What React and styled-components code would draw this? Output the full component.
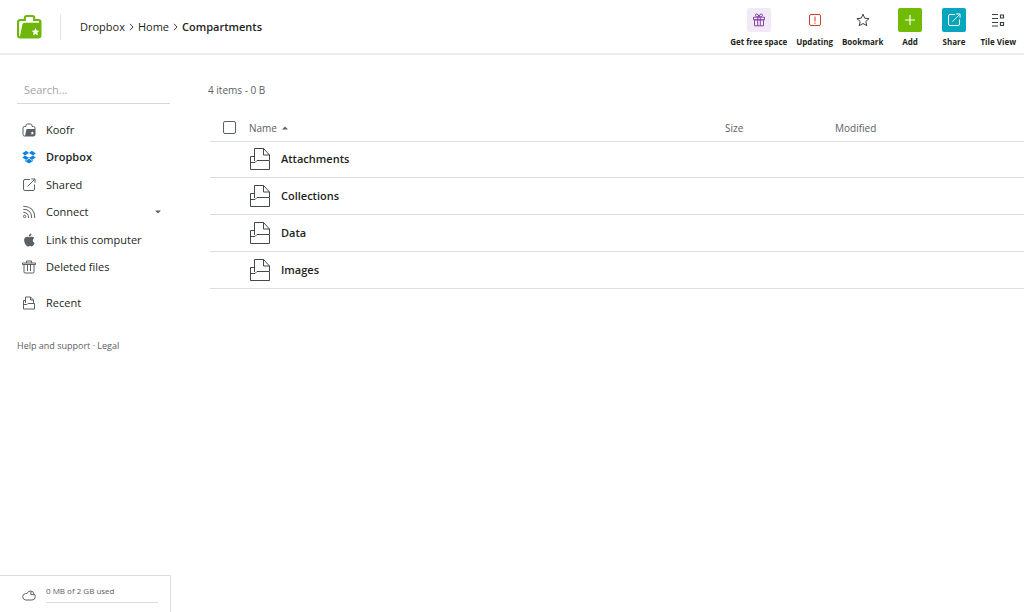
import styled, { createGlobalStyle, css } from "styled-components";

const GlobalStyle = createGlobalStyle`
    *{
        box-sizing: border-box;
    }
    body{
        margin: 0;
        background: #fff;
        color: #1d1f20;
        font-family: "Open Sans", "Noto Sans", sans-serif;
        font-size: 11px;
        line-height: 16px;
    }
    a{
        color: inherit;
        text-decoration: none;
    }
    button{
        margin: 0;
        padding: 0;
        border: 0;
        background: none;
        color: inherit;
        font: inherit;
        cursor: pointer;
    }
`;

const Page = styled.div`
    display: flex;
    flex-direction: column;
    min-height: 100vh;
`;
const Header = styled.header`
    display: flex;
    align-items: center;
    height: 55px;
    padding: 0 8px 0 16px;
    border-bottom: 2px solid #ececec;
`;
const Logo = styled.a`
    display: flex;
    padding-right: 18px;
    border-right: 1px solid #e4e4e4;
    svg{
        display: block;
    }
`;
const Breadcrumbs = styled.nav`
    display: flex;
    align-items: center;
    gap: 4px;
    flex: 1;
    padding-left: 19px;
`;
const Crumb = styled.a`
    font-weight: ${props => props.$current ? 600 : 400};
`;
const Toolbar = styled.div`
    display: flex;
    gap: 9px;
`;
const ToolButton = styled.button`
    display: flex;
    flex-direction: column;
    align-items: center;
    gap: 4px;
    min-width: 35px;
    padding-top: 2px;
    font-size: 8px;
    font-weight: 700;
    line-height: 12px;
    white-space: nowrap;
`;
const ToolIcon = styled.span`
    display: flex;
    align-items: center;
    justify-content: center;
    width: 24px;
    height: 24px;
    border-radius: 2px;
    background: ${props => props.$bg || "transparent"};
    color: ${props => props.$color || "#3c4043"};
`;
const Body = styled.div`
    display: flex;
    flex: 1;
`;
const Sidebar = styled.aside`
    display: flex;
    flex-direction: column;
    flex: none;
    width: 171px;
`;
const SearchInput = styled.input`
    height: 28px;
    margin: 21px 1px 12px 17px;
    padding: 0 7px;
    border: 0;
    border-bottom: 1px solid #d6d6d6;
    outline: 0;
    background: none;
    color: inherit;
    font: inherit;
    &::placeholder{
        color: #a3a3a3;
        opacity: 1;
    }
`;
const Places = styled.ul`
    display: grid;
    grid-auto-rows: 1fr;
    height: ${props => props.$height};
    margin: 0 0 8px;
    padding: 0;
    list-style: none;
`;
const Place = styled.li`
    display: flex;
    align-items: center;
    padding: 0 8px 0 22px;
`;
const PlaceLink = styled.a`
    display: flex;
    align-items: center;
    gap: 10px;
    flex: 1;
    color: #1d1f20;
    ${props => props.$active &&
    css`
        font-weight: 600;
    `}
    svg{
        color: ${props => props.$active ? "#1081de" : "#5a6063"};
    }
`;
const ExpandButton = styled.button`
    display: flex;
    padding: 5px 2px;
`;
const HelpLinks = styled.div`
    margin: 13px 0 0 17px;
    color: #5a6063;
    font-size: 9px;
`;
const Storage = styled.div`
    display: flex;
    align-items: center;
    gap: 10px;
    height: 37px;
    margin-top: auto;
    padding: 0 12px 2px 22px;
    border-top: 1px solid #dcdcdc;
    border-right: 1px solid #dcdcdc;
    color: #5a6063;
    svg{
        margin-top: 4px;
    }
`;
const StorageUsed = styled.div`
    flex: 1;
    height: 20px;
    border-bottom: 1px solid #dcdcdc;
    font-size: 8px;
    line-height: 15px;
`;
const Main = styled.main`
    flex: 1;
    padding: 27px 0 0 37px;
`;
const Summary = styled.p`
    margin: 0 0 17px;
    color: #5a6063;
    font-size: 10px;
`;
const FileTable = styled.table`
    width: calc(100% - 2px);
    height: 174px;
    margin-left: 2px;
    border-collapse: collapse;
    table-layout: fixed;
    th, td{
        padding: 0;
        border-bottom: 1px solid #dedede;
        text-align: left;
    }
    th{
        height: 26px;
        color: #5a6063;
        font-size: 10px;
        font-weight: 400;
    }
`;
const Column = styled.col`
    width: ${props => props.$width};
`;
const SelectAll = styled.input`
    appearance: none;
    display: block;
    width: 13px;
    height: 13px;
    margin: 0 0 0 13px;
    border: 1px solid #5a6063;
    border-radius: 2px;
    background: #fff;
    &:checked{
        background: #71ba05;
    }
`;
const SortButton = styled.button`
    display: flex;
    align-items: center;
    gap: 5px;
`;
const FileLink = styled.a`
    display: flex;
    align-items: center;
    gap: 10px;
    font-weight: 600;
    svg{
        display: block;
    }
`;

const Icon = ({ width = 14, height = 14, children }) => (
    <svg width={width} height={height} viewBox={`0 0 ${width} ${height}`} fill="none" stroke="currentColor" aria-hidden="true">
        {children}
    </svg>
);

const LogoIcon = () => (
    <svg width="26" height="26" viewBox="0 0 26 26" aria-label="Koofr" role="img">
        <path d="M4.200 5h3.500V4q0-3 3-3h5.600q3 0 3 3v1h3.100q3.100 0 3.100 3.100v13.200q0 3.200-3.200 3.200H4.200Q1 24.500 1 21.300V8.200Q1 5 4.200 5z" fill="#6eb70a" />
        <path d="M3.100 8.500q0-1.500 1.500-1.500h5.300V4q0-1 1-1h5.200q1 0 1 1v3h5.100q.9 0 .9.900v.8H8.600q-1.800 0-2.200 1.800L3.900 22.600q-.8-.3-.8-1.300z" fill="#fff" />
        <path d="M19.500 13.900l1.100 2.500 2.700.3-2 1.900.5 2.700-2.300-1.400-2.400 1.400.6-2.700-2.100-1.900 2.800-.3z" fill="#fff" />
    </svg>
);

const BriefcaseIcon = () => (
    <Icon>
        <path d="M2.500 3.500H4V2.400Q4 1 5.400 1h3.200Q10 1 10 2.400v1.100h1.500q1.500 0 1.500 1.500v6.500q0 1.500-1.500 1.500h-9Q1 13 1 11.500V5q0-1.500 1.500-1.500z" />
        <path d="M4.500 6H13v5.500q0 1.500-1.500 1.500H3z" fill="currentColor" stroke="none" />
        <path d="M10.300 8.300l.5 1.200 1.300.1-1 .9.300 1.300-1.100-.7-1.100.7.300-1.300-1-.9 1.300-.1z" fill="#fff" stroke="none" />
    </Icon>
);
const DropboxIcon = () => (
    <Icon>
        <g fill="currentColor" stroke="none">
            <path d="M4.200.8L.3 3.300l2.600 2.100L7 3z" />
            <path d="M9.800.8L7 3l4.100 2.400 2.600-2.100z" />
            <path d="M2.900 5.400L.3 7.500l3.900 2.500L7 7.800z" />
            <path d="M11.100 5.400L7 7.800 9.800 10l3.900-2.500z" />
            <path d="M7 8.500l-2.800 2.300-1.300-.8v1L7 13.400l4.100-2.400v-1l-1.300.8z" />
        </g>
    </Icon>
);
const ShareIcon = () => (
    <Icon>
        <path d="M8 1.500H3Q1.500 1.500 1.500 3v8q0 1.500 1.500 1.500h8q1.500 0 1.500-1.500V6.500" />
        <path d="M5.500 8.500l7.300-7.300M9.200 1h3.800v3.800" />
    </Icon>
);
const FeedIcon = () => (
    <Icon>
        <circle cx="2.600" cy="11.400" r="1.200" />
        <path d="M1.300 7.400q5.300 0 5.300 5.600M1.300 4.300q8.400 0 8.400 8.700M1.300 1.300q11.500 0 11.500 11.700" />
    </Icon>
);
const AppleIcon = () => (
    <Icon>
        <path d="M9.400.6q.1 1.200-.7 2.100-.8.900-1.900.9-.2-1.100.6-2 .8-.9 2-1zM12.300 4.900q-1.500.9-1.500 2.500 0 1.900 1.800 2.600-.5 1.500-1.400 2.600-.8 1-1.800.8l-.9-.3q-.8-.3-1.600.1-1 .4-1.700.1-1.100-.5-2.200-2.600-1.300-2.600-.8-4.600.7-2.300 2.900-2.300.6 0 1.300.3.600.3 1.100.1.600-.2 1.400-.4 2.200-.4 3.400 1.100z" fill="currentColor" stroke="none" />
    </Icon>
);
const TrashIcon = () => (
    <Icon>
        <path d="M.5 3h13v1.500H.5zM4.500 3V1h5v2M2 4.500v7.400Q2 13 3.100 13h7.800q1.100 0 1.100-1.100V4.500M5.500 5v6M8.500 5v6" />
    </Icon>
);
const RecentIcon = () => (
    <Icon>
        <path d="M3.500 7V1H8.500L11.500 4V7M8.500 1V4h3M3.500 4.500H1.500v8.500h11V7.500H6L5 8.500H1.500" />
    </Icon>
);
const FolderIcon = () => (
    <Icon width={22} height={24}>
        <path d="M5.500 14V1.500H14.500L20.500 8V13M14.500 1.500V8H20.500M5.500 9.500H1.500V22.500H20.500V13.500H8L6 15.500H1.500" stroke="#303335" strokeWidth=".9" />
    </Icon>
);
const CloudIcon = () => (
    <Icon>
        <path d="M3.600 12h6.500q3.200-.3 3.200-3.300 0-1.800-1.300-2.800Q11.500 3 8.500 3 6 3 5 5.600 4.200 5.400 3.600 5.500.7 5.900.7 8.700.8 11.700 3.600 12zM8.900 3.200v3.500h3.500" />
    </Icon>
);
const GiftIcon = () => (
    <Icon>
        <path d="M1.500 4.200h11v2.600h-11zM2.500 6.800h9v6h-9zM5.700 4.200v8.600M8.300 4.200v8.600M7 4Q3.500 4 3.500 2.300q0-1.300 1.300-1.300Q6.500 1 7 4q.5-3 2.200-3 1.300 0 1.300 1.300Q10.500 4 7 4z" />
    </Icon>
);
const AlertIcon = () => (
    <Icon>
        <rect x="1.500" y="1.500" width="11" height="11" rx="1.500" />
        <path d="M7 3.500v5M7 9.500v1.300" />
    </Icon>
);
const StarIcon = () => (
    <Icon>
        <path d="M7 1.200l1.700 4 4.400.4-3.300 2.900 1 4.200L7 10.500l-3.800 2.200 1-4.200L.9 5.600l4.400-.4z" />
    </Icon>
);
const PlusIcon = () => (
    <Icon>
        <path d="M7 2v10M2 7h10" strokeWidth="1.200" />
    </Icon>
);
const TilesIcon = () => (
    <Icon>
        <path d="M1 1.500h6M1 5.500h6M1 9.500h6M1 13h6M9.500 2h3v3h-3zM9.500 9.500h3v3h-3z" strokeWidth="1.200" />
    </Icon>
);
const ChevronIcon = () => (
    <svg width="5" height="8" viewBox="0 0 5 8" fill="none" stroke="#3c4043" aria-hidden="true">
        <path d="M1 .800L4 4 1 7.200" />
    </svg>
);
const CaretIcon = ({ up }) => (
    <svg width="6" height="4" viewBox="0 0 6 4" fill="#5a6063" aria-hidden="true">
        <path d={up ? "M0 3.500L3 .5l3 3z" : "M0 .5h6l-3 3z"} />
    </svg>
);

const crumbs = ["Dropbox", "Home", "Compartments"];
const tools = [
    { label: "Get free space", icon: <GiftIcon />, bg: "#f1eaf6", color: "#8546a6" },
    { label: "Updating", icon: <AlertIcon />, color: "#cf3b2b" },
    { label: "Bookmark", icon: <StarIcon /> },
    { label: "Add", icon: <PlusIcon />, bg: "#71ba05", color: "#fff" },
    { label: "Share", icon: <ShareIcon />, bg: "#06a7bd", color: "#fff" },
    { label: "Tile View", icon: <TilesIcon /> },
];
const places = [
    { label: "Koofr", icon: <BriefcaseIcon /> },
    { label: "Dropbox", icon: <DropboxIcon />, active: true },
    { label: "Shared", icon: <ShareIcon /> },
    { label: "Connect", icon: <FeedIcon />, expandable: true },
    { label: "Link this computer", icon: <AppleIcon /> },
    { label: "Deleted files", icon: <TrashIcon /> },
];
const recent = [{ label: "Recent", icon: <RecentIcon /> }];
const folders = ["Attachments", "Collections", "Data", "Images"];

const PlaceList = ({ items, height }) => (
    <Places $height={height}>
        {items.map(item => (
            <Place key={item.label}>
                <PlaceLink href="#" $active={item.active}>
                    {item.icon}
                    {item.label}
                </PlaceLink>
                {item.expandable &&
                    <ExpandButton aria-label="Expand"><CaretIcon /></ExpandButton>
                }
            </Place>
        ))}
    </Places>
);

const App = () => (
    <Page>
        <GlobalStyle />
        <Header>
            <Logo href="#"><LogoIcon /></Logo>
            <Breadcrumbs>
                {crumbs.map((crumb, i) => [
                    i > 0 && <ChevronIcon key={`${crumb}-sep`} />,
                    <Crumb key={crumb} href="#" $current={i === crumbs.length - 1}>{crumb}</Crumb>
                ])}
            </Breadcrumbs>
            <Toolbar>
                {tools.map(tool => (
                    <ToolButton key={tool.label}>
                        <ToolIcon $bg={tool.bg} $color={tool.color}>{tool.icon}</ToolIcon>
                        {tool.label}
                    </ToolButton>
                ))}
            </Toolbar>
        </Header>
        <Body>
            <Sidebar>
                <SearchInput type="search" placeholder="Search..." aria-label="Search" />
                <PlaceList items={places} height="165px" />
                <PlaceList items={recent} height="28px" />
                <HelpLinks>
                    <a href="#">Help and support</a> · <a href="#">Legal</a>
                </HelpLinks>
                <Storage>
                    <CloudIcon />
                    <StorageUsed>0 MB of 2 GB used</StorageUsed>
                </Storage>
            </Sidebar>
            <Main>
                <Summary>4 items - 0 B</Summary>
                <FileTable>
                    <colgroup>
                        <Column $width="39px" />
                        <Column />
                        <Column $width="110px" />
                        <Column $width="189px" />
                    </colgroup>
                    <thead>
                        <tr>
                            <th><SelectAll type="checkbox" aria-label="Select all" /></th>
                            <th><SortButton>Name <CaretIcon up /></SortButton></th>
                            <th>Size</th>
                            <th>Modified</th>
                        </tr>
                    </thead>
                    <tbody>
                        {folders.map(name => (
                            <tr key={name}>
                                <td></td>
                                <td><FileLink href="#"><FolderIcon />{name}</FileLink></td>
                                <td></td>
                                <td></td>
                            </tr>
                        ))}
                    </tbody>
                </FileTable>
            </Main>
        </Body>
    </Page>
);

export default App;
